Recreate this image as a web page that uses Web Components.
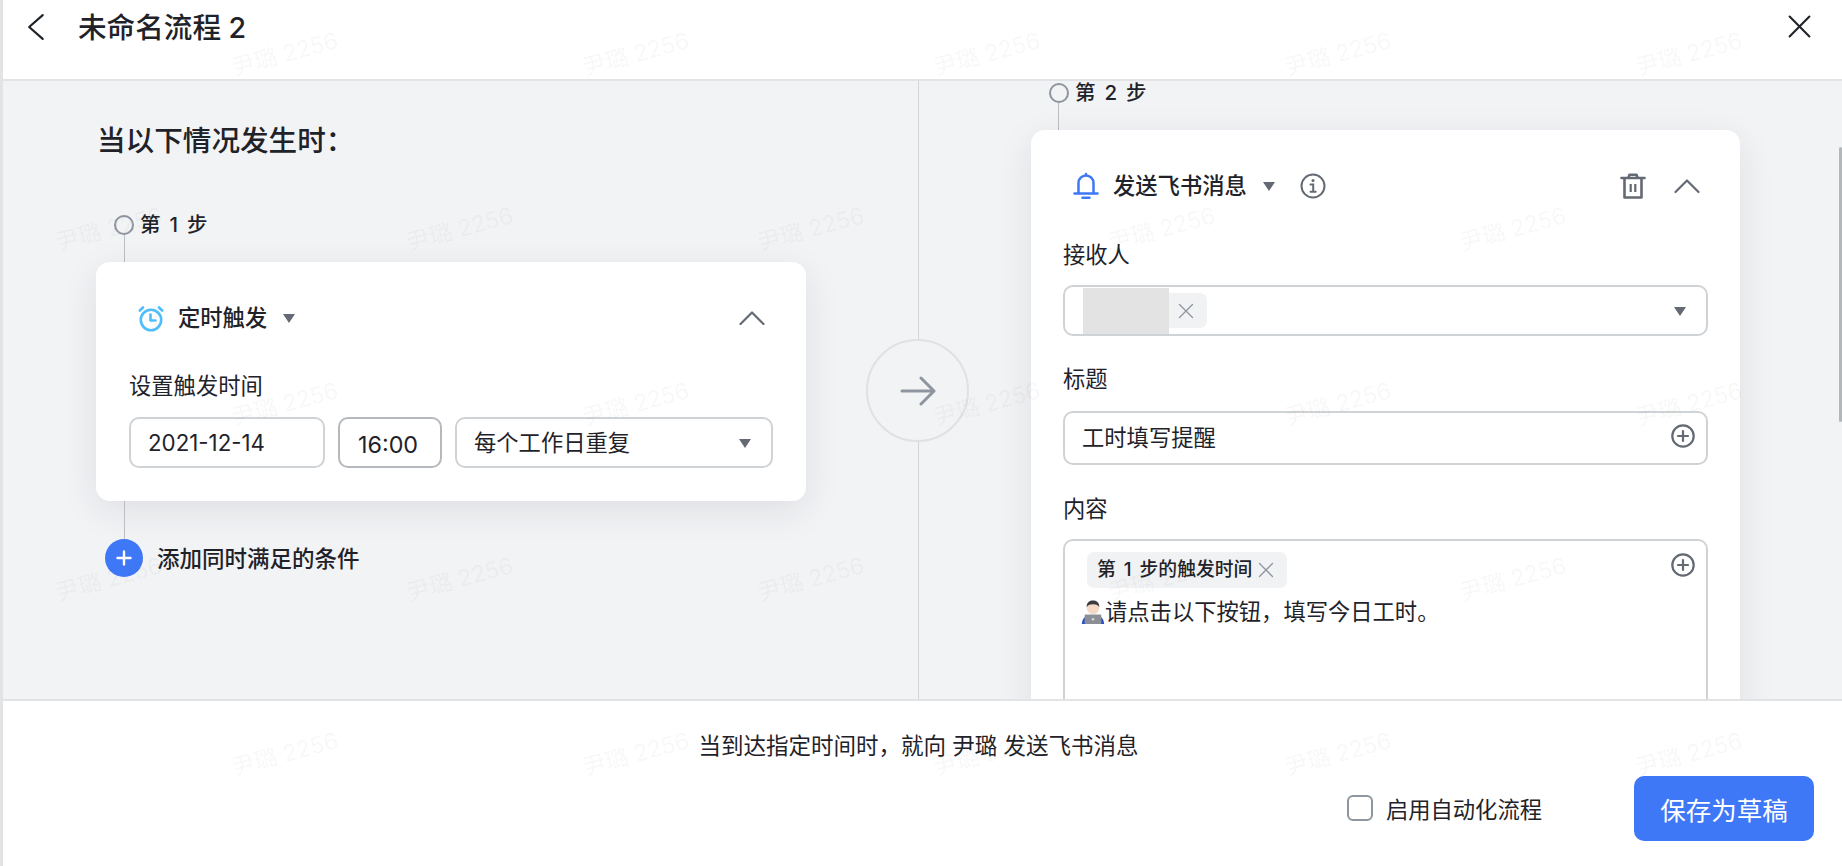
<!DOCTYPE html>
<html lang="zh">
<head>
<meta charset="utf-8">
<title>未命名流程 2</title>
<style>
  html, body { margin: 0; height: 100%; overflow: hidden; background: #fff; }
  body { font-family: Inter, "Noto Sans CJK SC", sans-serif; color: #1f2329; }
</style>
</head>
<body>
<flow-page>
  <flow-header slot="header" title="未命名流程 2"></flow-header>

  <flow-pane slot="left" side="left">
    <h2 class="lead" style="margin:0 0 0 1px;height:40px;font-size:28.6px;line-height:40px;font-weight:500;">当以下情况发生时：</h2>
    <step-mark label="第 1 步" style="margin:54px 0 0 18px;"></step-mark>
    <step-line len="27" style="margin-left:28px;"></step-line>
    <flow-card>
      <ui-icon slot="icon" name="clock" size="26"></ui-icon>
      <span slot="title">定时触发</span>
      <ui-icon slot="actions" name="chevron" size="26"></ui-icon>
      <field-label first>设置触发时间</field-label>
      <div style="display:flex;gap:13px;">
        <field-box style="width:196px;">2021-12-14</field-box>
        <field-box style="width:104px;" kind="time">16:00</field-box>
        <field-box style="width:318px;" caret>每个工作日重复</field-box>
      </div>
    </flow-card>
    <step-line len="38" style="margin-left:28px;"></step-line>
    <add-condition>添加同时满足的条件</add-condition>
  </flow-pane>

  <arrow-link slot="arrow"></arrow-link>

  <flow-pane slot="right" side="right">
    <step-mark label="第 2 步" style="margin-left:18px;"></step-mark>
    <step-line len="27" style="margin-left:27px;"></step-line>
    <flow-card tall>
      <ui-icon slot="icon" name="bell" size="26"></ui-icon>
      <span slot="title">发送飞书消息</span>
      <ui-icon slot="after" name="info" size="26"></ui-icon>
      <ui-icon slot="actions" name="trash" size="26"></ui-icon>
      <ui-icon slot="actions" name="chevron" size="26"></ui-icon>

      <field-label gap="41" under="15">接收人</field-label>
      <field-box caret>
        <tag-chip redacted style="margin-left:1px;"></tag-chip>
      </field-box>

      <field-label gap="28" under="17">标题</field-label>
      <field-box add height="54">工时填写提醒</field-box>

      <field-label gap="29" under="15">内容</field-label>
      <field-box add multi>
        <tag-chip style="margin-left:5px;">第 1 步的触发时间</tag-chip>
        <div style="display:flex;align-items:center;height:38px;margin:5px 0 0 -1px;">
          <ui-icon name="coder" size="24"></ui-icon><span>请点击以下按钮，填写今日工时。</span>
        </div>
      </field-box>
    </flow-card>
  </flow-pane>

  <flow-footer slot="footer"></flow-footer>
  <water-mark slot="overlay" text="尹璐 2256"></water-mark>
</flow-page>

<script>
// 아이콘 모음
const ICONS = {
  back: '<path d="M14.500 1 2 12l12.500 11" fill="none" stroke="#1f2329" stroke-width="2" stroke-linecap="round" stroke-linejoin="round"/>',
  close: '<path d="M2.500 2.500 21.500 21.500M21.500 2.500 2.500 21.500" fill="none" stroke="#1f2329" stroke-width="2" stroke-linecap="round"/>',
  chevron: '<path d="M1.500 19 13 7.500 24.500 19" fill="none" stroke="#646a73" stroke-width="2.200" stroke-linecap="round" stroke-linejoin="round"/>',
  clock: '<g fill="none" stroke="#4fbdfb" stroke-width="2.600" stroke-linecap="round" stroke-linejoin="round"><circle cx="13" cy="15" r="10.200"/><path d="M12.500 9.500v6h5M1.800 5.500 5 2.500M24.200 5.500 21 2.500"/></g>',
  bell: '<g fill="none" stroke="#3f78f7" stroke-width="2.500" stroke-linecap="round" stroke-linejoin="round"><path d="M5.500 20V10a7.500 7.500 0 0 1 15 0v10"/><path d="M1.500 20.500h23"/><path d="M9.500 24.800h7"/><path d="M13 1v1"/></g>',
  info: '<g fill="none" stroke="#646a73" stroke-width="2" stroke-linecap="round"><circle cx="13" cy="13" r="11.500"/><path d="M10.500 11.500h2.700v7M10.500 18.700h5.200"/></g><circle cx="13" cy="7.600" r="1.500" fill="#646a73"/>',
  trash: '<g fill="none" stroke="#646a73" stroke-width="2.600" stroke-linejoin="round"><path d="M4.500 6v18.500h17V6"/><path d="M1.500 5h23" stroke-linecap="round"/><path d="M8.500 4.500 9.500 1.800h7l1 2.700"/><path d="M10.700 11v8M15.300 11v8" stroke-width="2.200"/></g>',
  plus: '<g fill="none" stroke="#646a73" stroke-width="2.200" stroke-linecap="round"><circle cx="12" cy="12" r="10.700"/><path d="M12 7v10M7 12h10"/></g>',
  x: '<path d="M1.500 1.500 14.500 14.500M14.500 1.500 1.500 14.500" fill="none" stroke="#8f959e" stroke-width="1.300" stroke-linecap="round"/>',
  coder: '<circle cx="11.500" cy="7.500" r="6" fill="#f4dac6"/><path d="M5.500 7C5.200 2 8.500 .4 11.500 .4S17.800 2 17.500 7c-.8-2-2.500-2.900-6-2.900S6.300 5 5.500 7Z" fill="#3a3a40"/><path d="M.8 23c.4-4 1.500-6 3.700-7v7ZM22.200 23c-.4-4-1.500-6-3.700-7v7Z" fill="#2c4fc4"/><rect x="3.500" y="14" width="16" height="9" rx="1" fill="#8b8f96"/><circle cx="11.500" cy="18.500" r="1.200" fill="#d5d7da"/>'
};

class UiIcon extends HTMLElement {
  connectedCallback() {
    const size = this.getAttribute('size') || 24;
    const view = { back: 24, close: 24, plus: 24, x: 16, coder: 23 }[this.getAttribute('name')] || 26;
    this.attachShadow({ mode: 'open' }).innerHTML = `
<style>
  :host { display: block; width: ${size}px; height: ${size}px; flex: none; }
  svg { display: block; width: 100%; height: 100%; overflow: visible; }
</style>
<svg viewBox="0 0 ${view} ${view}">${ICONS[this.getAttribute('name')]}</svg>`;
  }
}

class FlowPage extends HTMLElement {
  constructor() {
    super();
    this.attachShadow({ mode: 'open' }).innerHTML = `
<style>
  :host {
    display: flex;
    flex-direction: column;
    position: relative;
    width: 1842px;
    height: 866px;
    box-sizing: border-box;
    border-left: 3px solid #e3e3e3;
    overflow: hidden;
  }
  .main {
    flex: 1;
    min-height: 0;
    display: flex;
    position: relative;
    background: #f2f3f5;
    overflow: hidden;
  }
  .thumb {
    position: absolute;
    top: 66px;
    right: 0;
    width: 3px;
    height: 275px;
    border-radius: 2px;
    background: #b4b7ba;
  }
</style>
<slot name="header"></slot>
<div class="main">
  <slot name="left"></slot>
  <slot name="arrow"></slot>
  <slot name="right"></slot>
  <div class="thumb"></div>
</div>
<slot name="footer"></slot>
<slot name="overlay"></slot>`;
  }
}

class FlowHeader extends HTMLElement {
  connectedCallback() {
    this.attachShadow({ mode: 'open' }).innerHTML = `
<style>
  :host {
    display: flex;
    align-items: center;
    justify-content: space-between;
    box-sizing: border-box;
    height: 81px;
    padding: 0 30px 26px 24px;
    background: #fff;
    border-bottom: 2px solid #e2e3e5;
  }
  .left { display: flex; align-items: center; gap: 25px; }
  h1 { margin: 2px 0 0; font-size: 28.6px; line-height: 40px; font-weight: 500; }
</style>
<div class="left">
  <ui-icon name="back" size="26"></ui-icon>
  <h1>${this.getAttribute('title')}</h1>
</div>
<ui-icon name="close" size="25"></ui-icon>`;
  }
}

class FlowPane extends HTMLElement {
  connectedCallback() {
    const isLeft = this.getAttribute('side') === 'left';
    this.attachShadow({ mode: 'open' }).innerHTML = `
<style>
  :host {
    display: block;
    box-sizing: border-box;
    ${isLeft
      ? 'width: 915px; flex: none; padding: 40px 0 0 93px;'
      : 'flex: 1; min-width: 0; padding: 2px 0 0 112px; border-left: 1px solid #d3d5d8;'}
  }
</style>
<slot></slot>`;
  }
}

class StepMark extends HTMLElement {
  connectedCallback() {
    this.attachShadow({ mode: 'open' }).innerHTML = `
<style>
  :host { display: flex; align-items: center; gap: 6px; height: 20px; }
  .dot { width: 16px; height: 16px; border: 2px solid #8f959e; border-radius: 50%; flex: none; }
  span { font-size: 20.5px; line-height: 20px; font-weight: 500; word-spacing: 3.5px; white-space: nowrap; }
</style>
<div class="dot"></div><span>${this.getAttribute('label')}</span>`;
  }
}

class StepLine extends HTMLElement {
  connectedCallback() {
    this.attachShadow({ mode: 'open' }).innerHTML = `
<style>
  :host { display: block; width: 1px; height: ${this.getAttribute('len')}px; background: #bbbfc4; }
</style>`;
  }
}

class FlowCard extends HTMLElement {
  connectedCallback() {
    const tall = this.hasAttribute('tall');
    this.attachShadow({ mode: 'open' }).innerHTML = `
<style>
  :host {
    display: block;
    box-sizing: border-box;
    ${tall ? 'width: 709px; height: 700px; padding: 0 32px 33px;' : 'width: 710px; padding: 0 33px 33px;'}
    background: #fff;
    border-radius: 14px;
    box-shadow: 0 10px 36px rgba(31, 35, 41, .09);
  }
  .head { display: flex; align-items: center; height: 26px; padding: 43px 8px 0 ${tall ? 10 : 9}px; }
  .title { margin-left: 14px; font-size: 22.3px; font-weight: 500; line-height: 26px; white-space: nowrap; }
  .caret {
    margin-left: 16px;
    width: 0; height: 0;
    border-left: 6.5px solid transparent;
    border-right: 6.5px solid transparent;
    border-top: 9px solid #646a73;
  }
  .after { margin-left: 25px; display: flex; }
  .actions { margin-left: auto; display: flex; align-items: center; gap: 28px; }
</style>
<div class="head">
  <slot name="icon"></slot>
  <span class="title"><slot name="title"></slot></span>
  <div class="caret"></div>
  <div class="after"><slot name="after"></slot></div>
  <div class="actions"><slot name="actions"></slot></div>
</div>
<slot></slot>`;
  }
}

class FieldLabel extends HTMLElement {
  connectedCallback() {
    const gap = this.hasAttribute('first') ? 40 : this.getAttribute('gap');
    const under = this.getAttribute('under') || 16;
    this.attachShadow({ mode: 'open' }).innerHTML = `
<style>
  :host {
    display: block;
    margin: ${gap}px 0 ${under}px;
    font-size: 22.3px;
    line-height: 30px;
    color: #1f2329;
  }
</style>
<slot></slot>`;
  }
}

class FieldBox extends HTMLElement {
  connectedCallback() {
    const isTime = this.getAttribute('kind') === 'time';
    const isMulti = this.hasAttribute('multi');
    const height = isMulti ? '400px' : (this.getAttribute('height') || 51) + 'px';
    this.attachShadow({ mode: 'open' }).innerHTML = `
<style>
  :host {
    display: flex;
    position: relative;
    box-sizing: border-box;
    height: ${height};
    ${isMulti ? 'flex-direction: column; align-items: flex-start; padding: 11px 17px;' : 'align-items: center; padding: 0 17px;'}
    ${isTime ? 'padding: 5px 0 0 18px;' : ''}
    border: 2px solid ${isTime ? '#b5b9be' : '#d0d3d6'};
    border-radius: 10px;
    background: #fff;
    font-size: ${isTime ? 23.3 : 22.3}px;
    line-height: 30px;
    white-space: nowrap;
  }
  .caret {
    position: absolute;
    right: 20px;
    top: 50%;
    margin-top: -4px;
    width: 0; height: 0;
    border-left: 6.5px solid transparent;
    border-right: 6.5px solid transparent;
    border-top: 9px solid #646a73;
  }
  .add { position: absolute; right: 11px; top: ${isMulti ? 12 : 11}px; }
</style>
<slot></slot>
${this.hasAttribute('caret') ? '<div class="caret"></div>' : ''}
${this.hasAttribute('add') ? '<ui-icon class="add" name="plus" size="24"></ui-icon>' : ''}`;
  }
}

class TagChip extends HTMLElement {
  connectedCallback() {
    const redacted = this.hasAttribute('redacted');
    this.attachShadow({ mode: 'open' }).innerHTML = `
<style>
  :host {
    display: inline-flex;
    align-items: center;
    justify-content: flex-end;
    position: relative;
    box-sizing: border-box;
    height: ${redacted ? 35 : 36}px;
    padding: 0 13px 0 10px;
    gap: 6px;
    ${redacted ? 'width: 124px;' : ''}
    background: #f1f2f3;
    border-radius: 7px;
    font-size: 18.8px;
    font-weight: 500;
    word-spacing: 3px;
  }
  .mask { position: absolute; left: 0; top: -5px; width: 86px; height: 46px; background: #e3e3e3; }
</style>
${redacted ? '<div class="mask"></div>' : ''}
<slot></slot>
<ui-icon name="x" size="16"></ui-icon>`;
  }
}

class AddCondition extends HTMLElement {
  connectedCallback() {
    this.attachShadow({ mode: 'open' }).innerHTML = `
<style>
  :host { display: flex; align-items: center; gap: 14px; margin-left: 9px; font-size: 22.5px; font-weight: 500; }
  .btn { width: 38px; height: 38px; border-radius: 50%; background: #3f78f7; display: flex; align-items: center; justify-content: center; }
  span { padding-bottom: 2px; }
</style>
<div class="btn">
  <svg width="16" height="16" viewBox="0 0 16 16"><path d="M8 1.500v13M1.500 8h13" stroke="#fff" stroke-width="2.400" stroke-linecap="round"/></svg>
</div>
<span><slot></slot></span>`;
  }
}

class ArrowLink extends HTMLElement {
  connectedCallback() {
    this.attachShadow({ mode: 'open' }).innerHTML = `
<style>
  :host {
    position: absolute;
    left: 863px;
    top: 258px;
    box-sizing: border-box;
    width: 103px;
    height: 103px;
    display: flex;
    align-items: center;
    justify-content: center;
    border: 2px solid #e0e1e3;
    border-radius: 50%;
    background: #f2f3f5;
  }
</style>
<svg width="36" height="30" viewBox="0 0 36 30"><path d="M2 15h32M21 2l13 13-13 13" fill="none" stroke="#8f959e" stroke-width="3" stroke-linecap="round" stroke-linejoin="round"/></svg>`;
  }
}

class FlowFooter extends HTMLElement {
  connectedCallback() {
    this.attachShadow({ mode: 'open' }).innerHTML = `
<style>
  :host {
    display: block;
    box-sizing: border-box;
    height: 167px;
    padding: 30px 28px 0 0;
    background: #fff;
    border-top: 2px solid #e2e3e5;
    position: relative;
    font-size: 22.3px;
  }
  .summary { height: 30px; line-height: 30px; font-size: 22.5px; text-align: center; padding-right: 8px; padding-left: 28px; }
  .row { display: flex; align-items: center; justify-content: flex-end; margin-top: 15px; }
  .check { display: flex; align-items: center; gap: 13px; margin: -2px 92px 0 0; }
  .box { width: 26px; height: 26px; box-sizing: border-box; border: 2px solid #8f959e; border-radius: 6px; }
  button {
    width: 180px;
    height: 65px;
    border: none;
    border-radius: 10px;
    background: #3f78f7;
    color: #fff;
    font: inherit;
    font-size: 25.5px;
  }
</style>
<div class="summary">当到达指定时间时，就向 尹璐 发送飞书消息</div>
<div class="row">
  <label class="check"><span class="box"></span><span>启用自动化流程</span></label>
  <button>保存为草稿</button>
</div>`;
  }
}

// 워터마크: 전체 화면 위에 겹쳐서 표시
class WaterMark extends HTMLElement {
  connectedCallback() {
    const text = this.getAttribute('text');
    const rows = [0, 1, 2, 3, 4].map(i => {
      const cells = Array.from({ length: 5 }, () => `<span>${text}</span>`).join('');
      return `<div class="row ${i % 2 ? 'even' : ''}">${cells}</div>`;
    }).join('');
    this.attachShadow({ mode: 'open' }).innerHTML = `
<style>
  :host { position: absolute; inset: 0; pointer-events: none; overflow: hidden; }
  .row { display: flex; height: 175px; padding-left: 106px; align-items: center; }
  .row:first-of-type { margin-top: -36px; }
  .row.even { padding-left: 0; margin-left: -70px; }
  span {
    flex: none;
    width: 351px;
    text-align: center;
    font-size: 23px;
    color: rgba(31, 35, 41, .05);
    transform: rotate(-15deg);
    white-space: nowrap;
  }
</style>
${rows}`;
  }
}

customElements.define('ui-icon', UiIcon);
customElements.define('flow-page', FlowPage);
customElements.define('flow-header', FlowHeader);
customElements.define('flow-pane', FlowPane);
customElements.define('step-mark', StepMark);
customElements.define('step-line', StepLine);
customElements.define('flow-card', FlowCard);
customElements.define('field-label', FieldLabel);
customElements.define('field-box', FieldBox);
customElements.define('tag-chip', TagChip);
customElements.define('add-condition', AddCondition);
customElements.define('arrow-link', ArrowLink);
customElements.define('flow-footer', FlowFooter);
customElements.define('water-mark', WaterMark);
</script>
</body>
</html>
